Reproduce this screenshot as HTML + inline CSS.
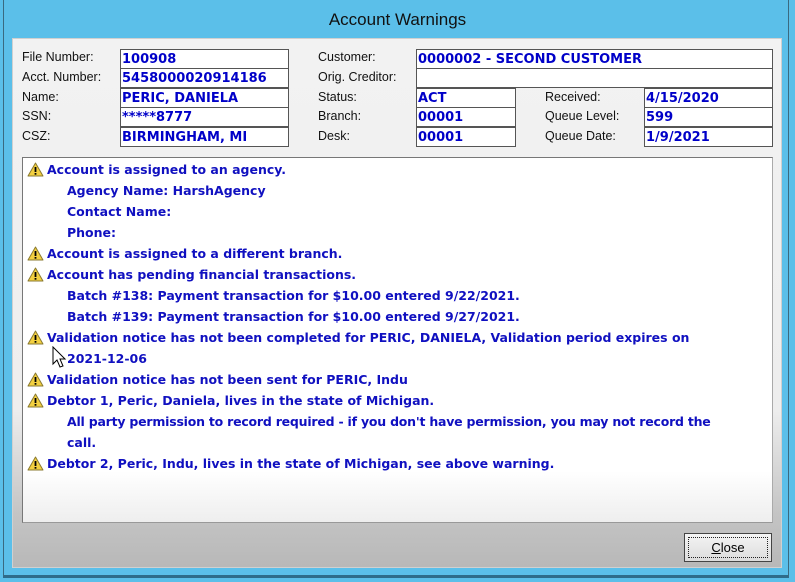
<!DOCTYPE html>
<html><head><meta charset="utf-8"><style>
*{margin:0;padding:0;box-sizing:border-box}
body{width:795px;height:582px;overflow:hidden;background:#5bbfe9;font-family:"Liberation Sans",sans-serif;position:relative}
.title{position:absolute;left:0;top:0;width:795px;height:38px;text-align:center;font-size:17px;line-height:40px;color:#111}
.frame{position:absolute;left:3px;top:0;width:786px;height:578px;border-left:1px solid #3a6a80;border-right:1px solid #3a6a80;border-bottom:3px solid #2e6c8a}
.body{position:absolute;left:12px;top:38px;width:770px;height:530px;background:linear-gradient(#f2f2f2 0%,#eeeeee 70%,#c4c4c4 90%,#b8b8b8 100%);border:1px solid #d0d0d0}
.lbl{position:absolute;font-size:12.5px;color:#111}
.box{position:absolute;background:#fff;border:1px solid #555;font-family:"DejaVu Sans",sans-serif;font-weight:bold;font-size:13px;color:#0000c8;padding-left:1px;line-height:19px;height:20px;white-space:nowrap;overflow:hidden}
.panel{position:absolute;left:22px;top:157px;width:751px;height:366px;background:linear-gradient(#fff 0%,#fff 86%,#eeeeee 100%);border:1px solid #777;border-right-color:#aaa;border-bottom-color:#999}
.ln{position:absolute;font-family:"DejaVu Sans",sans-serif;font-weight:bold;font-size:12.5px;color:#1010c0;white-space:nowrap}
.ic{position:absolute;width:17px;height:15px}
.btn{position:absolute;left:684px;top:533px;width:88px;height:29px;background:linear-gradient(#f4f4f4,#dcdcdc);border:1px solid #444;font-size:13px;text-align:center;line-height:27px}
.btn span{position:absolute;left:3px;top:3px;right:3px;bottom:3px;border:1px dotted #222}
</style></head><body>
<div class="frame"></div>
<div class="title">Account Warnings</div>
<div class="body"></div>
<div class="lbl" style="left:22px;top:50px">File Number:</div>
<div class="lbl" style="left:22px;top:70px">Acct. Number:</div>
<div class="lbl" style="left:22px;top:90px">Name:</div>
<div class="lbl" style="left:22px;top:109px">SSN:</div>
<div class="lbl" style="left:22px;top:129px">CSZ:</div>
<div class="box" style="left:120px;top:49px;width:169px">100908</div>
<div class="box" style="left:120px;top:68px;width:169px">5458000020914186</div>
<div class="box" style="left:120px;top:88px;width:169px">PERIC, DANIELA</div>
<div class="box" style="left:120px;top:107px;width:169px">*****8777</div>
<div class="box" style="left:120px;top:127px;width:169px">BIRMINGHAM, MI</div>
<div class="lbl" style="left:318px;top:50px">Customer:</div>
<div class="lbl" style="left:318px;top:70px">Orig. Creditor:</div>
<div class="lbl" style="left:318px;top:90px">Status:</div>
<div class="lbl" style="left:318px;top:109px">Branch:</div>
<div class="lbl" style="left:318px;top:129px">Desk:</div>
<div class="box" style="left:416px;top:49px;width:357px">0000002 - SECOND CUSTOMER</div>
<div class="box" style="left:416px;top:68px;width:357px"></div>
<div class="box" style="left:416px;top:88px;width:100px">ACT</div>
<div class="box" style="left:416px;top:107px;width:100px">00001</div>
<div class="box" style="left:416px;top:127px;width:100px">00001</div>
<div class="lbl" style="left:545px;top:90px">Received:</div>
<div class="lbl" style="left:545px;top:109px">Queue Level:</div>
<div class="lbl" style="left:545px;top:129px">Queue Date:</div>
<div class="box" style="left:644px;top:88px;width:129px">4/15/2020</div>
<div class="box" style="left:644px;top:107px;width:129px">599</div>
<div class="box" style="left:644px;top:127px;width:129px">1/9/2021</div>
<div class="panel"></div>
<svg width="0" height="0" style="position:absolute"><defs><symbol id="w" viewBox="0 0 17 15"><path d="M8.5 1 L16 14 L1 14 Z" fill="#f3d040" stroke="#8a7a30" stroke-width="1" stroke-linejoin="round"/><rect x="7.6" y="5" width="1.8" height="5" fill="#000"/><rect x="7.6" y="11" width="1.8" height="1.7" fill="#000"/></symbol></defs></svg>
<svg class="ic" style="left:27px;top:162px"><use href="#w"/></svg>
<div class="ln" style="left:47px;top:162px">Account is assigned to an agency.</div>
<div class="ln" style="left:67px;top:183px">Agency Name: HarshAgency</div>
<div class="ln" style="left:67px;top:204px">Contact Name:</div>
<div class="ln" style="left:67px;top:225px">Phone:</div>
<svg class="ic" style="left:27px;top:246px"><use href="#w"/></svg>
<div class="ln" style="left:47px;top:246px">Account is assigned to a different branch.</div>
<svg class="ic" style="left:27px;top:267px"><use href="#w"/></svg>
<div class="ln" style="left:47px;top:267px">Account has pending financial transactions.</div>
<div class="ln" style="left:67px;top:288px">Batch #138: Payment transaction for $10.00 entered 9/22/2021.</div>
<div class="ln" style="left:67px;top:309px">Batch #139: Payment transaction for $10.00 entered 9/27/2021.</div>
<svg class="ic" style="left:27px;top:330px"><use href="#w"/></svg>
<div class="ln" style="left:47px;top:330px">Validation notice has not been completed for PERIC, DANIELA, Validation period expires on</div>
<div class="ln" style="left:67px;top:351px">2021-12-06</div>
<svg class="ic" style="left:27px;top:372px"><use href="#w"/></svg>
<div class="ln" style="left:47px;top:372px">Validation notice has not been sent for PERIC, Indu</div>
<svg class="ic" style="left:27px;top:393px"><use href="#w"/></svg>
<div class="ln" style="left:47px;top:393px">Debtor 1, Peric, Daniela, lives in the state of Michigan.</div>
<div class="ln" style="left:67px;top:414px;letter-spacing:-0.22px">All party permission to record required - if you don't have permission, you may not record the</div>
<div class="ln" style="left:67px;top:435px">call.</div>
<svg class="ic" style="left:27px;top:456px"><use href="#w"/></svg>
<div class="ln" style="left:47px;top:456px">Debtor 2, Peric, Indu, lives in the state of Michigan, see above warning.</div>
<svg style="position:absolute;left:52px;top:346px" width="16" height="24"><path d="M1 1 L1 18 L5 14 L8 21 L11 20 L8 13 L13 13 Z" fill="#fff" stroke="#000" stroke-width="1"/></svg>
<div class="btn"><span></span><u>C</u>lose</div>
</body></html>
